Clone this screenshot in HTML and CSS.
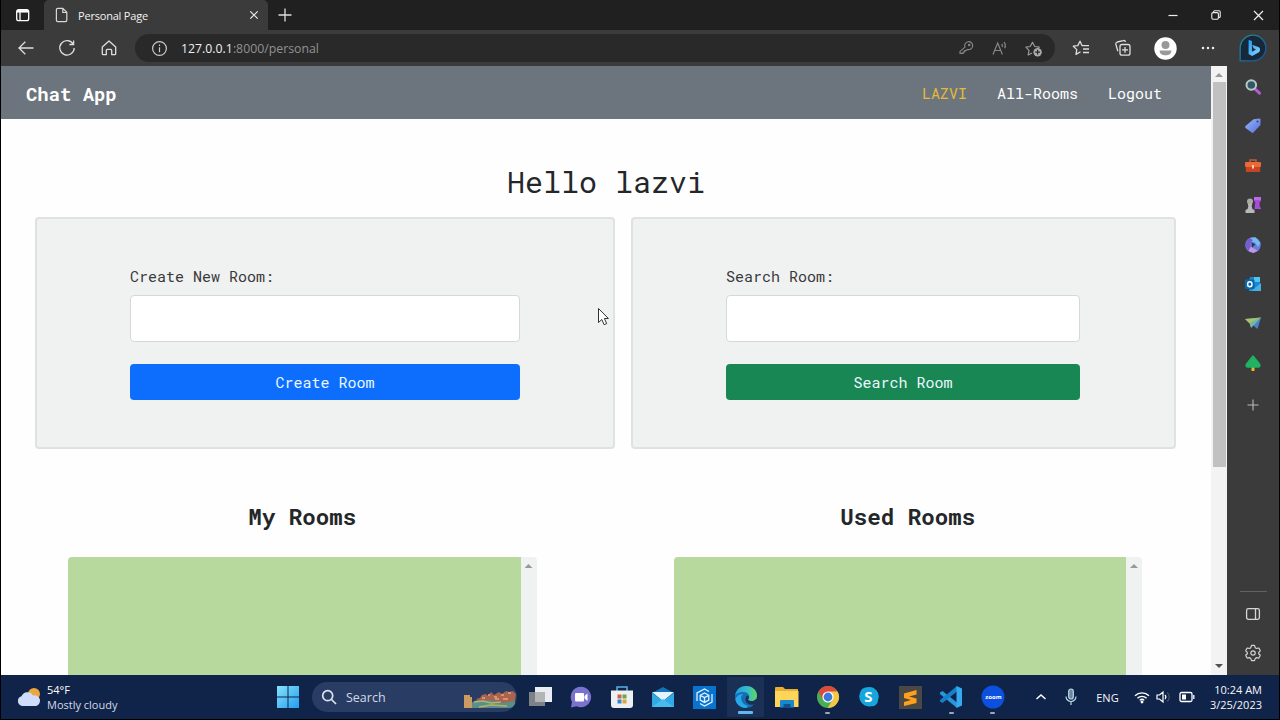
FILE: index.html
```html
<!DOCTYPE html>
<html lang="en">
<head>
<meta charset="utf-8">
<title>Personal Page</title>
<link rel="stylesheet" href="styles.css">
</head>
<body>
<div class="screen">
  <div class="titlebar">
    <div class="tab-actions"><svg width="16" height="16" viewBox="0 0 16 16" fill="none" stroke="#fff" stroke-width="1.3"><rect x="1.7" y="2.7" width="12" height="11" rx="2"/><path d="M2 4.3h11.5" stroke-width="2.5"/><path d="M5 5v8.5"/></svg></div>
    <div class="tab">
      <svg width="14" height="16" viewBox="0 0 14 16" fill="none" stroke="#d8d8d8" stroke-width="1.2"><path d="M2.8 1.3h5l4 4v7.9a1.4 1.4 0 0 1-1.4 1.4H2.8a1.4 1.4 0 0 1-1.4-1.4V2.7a1.4 1.4 0 0 1 1.4-1.4zM7.8 1.5v4h4"/></svg>
      <span class="tab-title">Personal Page</span>
      <svg width="10" height="10" viewBox="0 0 10 10" stroke="#eee" stroke-width="1.2"><path d="M1.3 1.3l7.4 7.4M8.7 1.3L1.3 8.7"/></svg>
    </div>
    <div class="new-tab"><svg width="14" height="14" viewBox="0 0 14 14" stroke="#ddd" stroke-width="1.3"><path d="M.5 7h13M7 .5v13"/></svg></div>
    <div class="window-controls">
      <span><svg width="10" height="10" viewBox="0 0 10 10" stroke="#eee" stroke-width="1.2"><path d="M.5 5.5h9"/></svg></span>
      <span><svg width="10" height="10" viewBox="0 0 10 10" fill="none" stroke="#eee" stroke-width="1.1"><rect x=".8" y="2.6" width="6.6" height="6.6" rx="1.2"/><path d="M2.6 2.4V1.8a1 1 0 0 1 1-1H8a1.2 1.2 0 0 1 1.2 1.2v4.4a1 1 0 0 1-1 1h-.7"/></svg></span>
      <span><svg width="11" height="11" viewBox="0 0 11 11" stroke="#eee" stroke-width="1.2"><path d="M1 1l9 9M10 1l-9 9"/></svg></span>
    </div>
  </div>

  <div class="toolbar">
    <div class="nav-icons">
      <span><svg width="18" height="18" viewBox="0 0 18 18" fill="none" stroke="#dedede" stroke-width="1.3"><path d="M16.5 9H2M8.3 2.8L2 9l6.3 6.2"/></svg></span>
      <span><svg width="18" height="18" viewBox="0 0 18 18" fill="none" stroke="#dedede" stroke-width="1.3"><path d="M15.2 5.2A7.2 7.2 0 1 0 16.2 9M15.6 1.5v4h-4.2"/></svg></span>
      <span><svg width="18" height="18" viewBox="0 0 18 18" fill="none" stroke="#dedede" stroke-width="1.3" stroke-linejoin="round"><path d="M2.3 8L9 2l6.7 6v6.7a1 1 0 0 1-1 1h-3v-4.4a1 1 0 0 0-1-1H7.3a1 1 0 0 0-1 1v4.4h-3a1 1 0 0 1-1-1z"/></svg></span>
    </div>
    <div class="address">
      <svg width="17" height="17" viewBox="0 0 17 17" fill="none" stroke="#ccc" stroke-width="1.2"><circle cx="8.5" cy="8.5" r="6.9"/><path d="M8.5 7.3v5M8.5 4.6v1.5"/></svg>
      <span class="url"><b>127.0.0.1</b>:8000/personal</span>
      <div class="address-icons">
        <span><svg width="16" height="16" viewBox="0 0 16 16" fill="none" stroke="#888" stroke-width="1.1"><path d="M7 7.2a4 4 0 1 1 2.3 2.2L8 10.6H6.6V12H5.2v1.4H2v-2z"/><circle cx="11.2" cy="5" r=".7"/></svg></span>
        <span><svg width="18" height="17" viewBox="0 0 18 17" fill="none" stroke="#888" stroke-width="1.2"><path d="M2 14.5L6.7 3l4.7 11.5M3.7 10.5h6M10.7 3.8a3.5 3.5 0 0 1 .5 3.2M13 2a6 6 0 0 1 .7 6.3"/></svg></span>
        <span><svg width="18" height="17" viewBox="0 0 18 17" fill="none" stroke="#999" stroke-width="1.2" stroke-linejoin="round"><path d="M7 13l-3.8 2 .8-4.6L.9 7.1l4.3-.6L7.5 2.3l2.3 4.2 4.5.6-1.8 1.7"/><circle cx="12.6" cy="12.2" r="4.2" fill="#aaa" stroke="none"/><path d="M12.6 9.8v4.8M10.2 12.2H15" stroke="#292929"/></svg></span>
      </div>
    </div>
    <div class="tool-icons">
      <span><svg width="18" height="18" viewBox="0 0 18 18" fill="none" stroke="#ddd" stroke-width="1.3" stroke-linejoin="round"><path d="M8.5 12.800L4 15.400l.8-4.800L1.300 7.200l4.500-.6L8 2.200l2 4.400h7M11 10h6M11 13.500h6"/></svg></span>
      <span><svg width="18" height="18" viewBox="0 0 18 18" fill="none" stroke="#ddd" stroke-width="1.3"><rect x="6" y="5.5" width="10" height="10.7" rx="2"/><path d="M11 8v5.8M8 10.9h6M3.9 12.2L1.8 5.1A2 2 0 0 1 3.2 3l6-1.4a2 2 0 0 1 2.4 1.3"/></svg></span>
      <span><svg width="23" height="23" viewBox="0 0 23 23"><circle cx="11.5" cy="11.5" r="11.2" fill="#fff"/><circle cx="11.5" cy="8" r="4" fill="#999"/><path d="M5.6 13.4h11.8c0 3.3-2.5 4.8-5.9 4.8s-5.9-1.5-5.9-4.8z" fill="#999"/></svg></span>
      <span><svg width="14" height="4" viewBox="0 0 14 4" fill="#eee"><circle cx="2" cy="2" r="1.25"/><circle cx="7" cy="2" r="1.25"/><circle cx="12" cy="2" r="1.25"/></svg></span>
      <span class="bing"><svg width="30" height="30" viewBox="0 0 30 30"><defs><linearGradient id="bingRing" x2="1" y2="1"><stop stop-color="#208f9c"/><stop offset="1" stop-color="#214d8a"/></linearGradient><linearGradient id="bingB" x2="1" y2="1"><stop stop-color="#219cf1"/><stop offset="1" stop-color="#8bd6ff"/></linearGradient></defs><path d="M15 2.2A12.8 12.8 0 1 1 15 27.8H2.2V15A12.8 12.8 0 0 1 15 2.2z" fill="#17283b" stroke="url(#bingRing)" stroke-width="1.3"/><path d="M10.6 6.8l3.3 1.3v10.7l4.1-2.3-2.5-1.2-1.4-3.5 6.2 2.3c2.3 1 2.2 4.3.2 5.5l-6.4 3.5-3.5-2z" fill="url(#bingB)"/></svg></span>
    </div>
  </div>

  <div class="browser-body">
    <main class="page">
      <nav class="navbar">
        <span class="brand">Chat App</span>
        <div class="links"><a class="user">LAZVI</a><a>All-Rooms</a><a>Logout</a></div>
      </nav>
      <h1 class="hello">Hello lazvi</h1>
      <div class="cards">
        <form class="card create">
          <label>Create New Room:</label><div class="input"></div>
          <div class="btn blue">Create Room</div>
        </form>
        <form class="card search">
          <label>Search Room:</label><div class="input"></div>
          <div class="btn green">Search Room</div>
        </form>
      </div>
      <div class="rooms">
        <section><h2>My Rooms</h2><div class="list"><div class="list-body"></div><div class="list-scroll"><i class="up"></i></div></div></section>
        <section><h2>Used Rooms</h2><div class="list"><div class="list-body"></div><div class="list-scroll"><i class="up"></i></div></div></section>
      </div>
    </main>
    <div class="scrollbar"><i class="up"></i><div class="thumb"></div><i class="down"></i></div>
    <aside class="sidebar">
      <span><svg width="18" height="18" viewBox="0 0 18 18"><path d="M10.5 10.5l5 4.7" stroke="#b45bd6" stroke-width="3" stroke-linecap="round"/><circle cx="7.3" cy="7" r="4.8" fill="#315864" stroke="#b9c8cd" stroke-width="2"/></svg></span>
      <span><svg width="18" height="18" viewBox="0 0 18 18"><defs><linearGradient id="tagFill" y2="1"><stop stop-color="#9bb9f8"/><stop offset="1" stop-color="#536ce0"/></linearGradient></defs><path d="M9.5 2.2l6-.8 1 1V8l-7.8 8.2L1.5 11q-.8-1 0-2z" fill="url(#tagFill)"/><circle cx="13.5" cy="4.5" r="1" fill="#37405f"/></svg></span>
      <span><svg width="18" height="18" viewBox="0 0 18 18"><path d="M6 5V3h6v2" fill="none" stroke="#c7573b" stroke-width="1.5"/><rect x="1" y="5" width="16" height="5" rx="1" fill="#e96a38"/><path d="M1.8 10h14.4v4a1 1 0 0 1-1 1H2.8a1 1 0 0 1-1-1z" fill="#c84523"/><path d="M9 8v3.5" stroke="#ffcf99" stroke-width="2"/></svg></span>
      <span><svg width="18" height="18" viewBox="0 0 18 18"><path d="M10 1h7v4l-1.400 1v4.500L17 12v1h-6.500l.8-7L10 5z" fill="#a64ddd"/><path d="M10 1h7v3h-7z" fill="#bd68eb"/><circle cx="6" cy="5.500" r="3" fill="#aaa"/><path d="M3.700 8h4.600l-.7 2 .8 3 2.100 1v3H1.500v-3l2.100-1 .8-3z" fill="#b9b9b9"/></svg></span>
      <span><svg width="18" height="18" viewBox="0 0 18 18"><circle cx="9" cy="9" r="7.800" fill="#657ddd"/><path d="M5.500 2l6-.8 5 5.800-2.500 4L10.500 6H5z" fill="#75b9ee"/><path d="M5.500 1.800L1 9l3.600 6.200L7 11 5.800 8 9 4z" fill="#775dca"/><path d="M4.500 15l5 2 4-2.500-3-1.800-4-2z" fill="#c595e3"/><path d="M7.500 6.500l4 2-3.500 3z" fill="#29364e"/></svg></span>
      <span><svg width="18" height="18" viewBox="0 0 18 18"><path d="M6 2h10v14H5V5z" fill="#1a86d1"/><path d="M10 2h6v5h-6z" fill="#51c3f2"/><path d="M7 16l10-8v8z" fill="#46afe4"/><rect x="1" y="4.5" width="9.5" height="9.5" rx="1" fill="#0868ae"/><ellipse cx="5.8" cy="9.2" rx="2.2" ry="2.5" fill="none" stroke="#fff" stroke-width="1.4"/></svg></span>
      <span><svg width="18" height="18" viewBox="0 0 18 18"><path d="M1 4l16-1.500L13.500 14 8 9.500z" fill="#4a83ca"/><path d="M1 4l16-1.500-11.500 6z" fill="#aac269"/><path d="M5.500 8.500L17 2.500 7 13z" fill="#76b9a6"/></svg></span>
      <span><svg width="18" height="19" viewBox="0 0 18 19"><path d="M9 12v5" stroke="#e7b52c" stroke-width="3"/><path d="M8 2q1-1.300 2 0l6 7.500c1.200 2 .5 4.200-1.500 4.200h-11C1.500 13.700.800 11.500 2 9.500z" fill="#20b263"/></svg></span>
      <span class="add"><svg width="14" height="14" viewBox="0 0 14 14" stroke="#bbb" stroke-width="1.1"><path d="M1.500 7h11M7 1.500v11"/></svg></span>
      <div class="sidebar-end">
        <hr>
        <span><svg width="16" height="16" viewBox="0 0 16 16" fill="none" stroke="#d5d5d5" stroke-width="1.3"><rect x="1.600" y="2.600" width="12.800" height="10.800" rx="1.800"/><path d="M10.500 3v10"/></svg></span>
        <span><svg width="18" height="18" viewBox="0 0 18 18" fill="none" stroke="#d5d5d5" stroke-width="1.2" stroke-linejoin="round"><path d="M7.300 2l.5-.6h2.400l.5.6.5 1.700 1.300.8 1.900-.5.6.3 1.100 2v.8l-1.400 1.300v1.300l1.400 1.300v.8l-1.100 2-.6.3-1.900-.5-1.300.8-.5 1.700-.5.500H7.800l-.5-.5-.5-1.700-1.300-.8-1.900.5-.6-.3-1.100-2V11l1.400-1.300V8.400L1.900 7.100v-.8l1.100-2 .6-.3 1.900.5 1.300-.8z"/><circle cx="9" cy="9" r="2.200"/></svg></span>
      </div>
    </aside>
  </div>

  <footer class="taskbar">
    <div class="weather">
      <svg width="26" height="24" viewBox="0 0 26 24"><circle cx="18" cy="9" r="6" fill="#eda53d"/><path d="M6 21a5 5 0 0 1-.5-9.700A6.300 6.300 0 0 1 17 10.500 5.300 5.300 0 0 1 20.200 21z" fill="#cfddfa"/></svg>
      <div><b>54°F</b><br>Mostly cloudy</div>
    </div>
    <span class="start"><svg width="22" height="22" viewBox="0 0 22 22"><defs><linearGradient id="startFill" x2="1" y2="1"><stop stop-color="#86e2fb"/><stop offset="1" stop-color="#239ef0"/></linearGradient></defs><path d="M0 0h10.500v10.500H0zM11.500 0H22v10.500H11.500zM0 11.500h10.500V22H0zM11.500 11.500H22V22H11.500z" fill="url(#startFill)"/></svg></span>
    <div class="task-search">
      <svg width="16" height="16" viewBox="0 0 16 16" fill="none" stroke="#dce3ee" stroke-width="1.700"><circle cx="6.700" cy="6.700" r="5"/><path d="M10.500 10.500L15 15"/></svg>
      <span>Search</span>
      <svg class="city" width="54" height="22" viewBox="0 0 54 22"><path d="M8 14l6-3h38v4q-2 4-6 4H5z" fill="#598f88"/><path d="M13 10l4-1 2-3 4-1 2 2 3-4 3 3 5-3 3 2 4-3 3 1 4-1 3 3-1 7-12 2-13-3-10 1z" fill="#a96450"/><path d="M1 6h6v2h2v11H1z" fill="#cc9a62"/><path d="M19 9h3m3-3h2m4 2h3m4-2h3m4-2h3m-16 6h4m4 0h5" stroke="#f0a077" stroke-width="1.500"/><path d="M11 13l9-1 8 2 10-1M16 18l12-2 16 1" stroke="#b5b06f" stroke-width="1.500" fill="none"/></svg>
    </div>
    <div class="apps">
      <span><svg width="24" height="24" viewBox="0 0 24 24"><rect x="7" y="2" width="17" height="15" fill="#e9edf1"/><rect x="1" y="7" width="16" height="14" fill="#7d8287"/><rect x="7" y="7" width="10" height="10" fill="#b2b4b6"/></svg></span>
      <span><svg width="22" height="22" viewBox="0 0 22 22"><path d="M11 .8A10.200 10.200 0 1 1 6.500 20.200L1 21.500l1-5.500A10.200 10.200 0 0 1 11 .8z" fill="#7b72cf"/><rect x="5" y="7" width="9" height="8.500" rx="1" fill="#fff"/><path d="M14.500 10l3-2.500V15l-3-2.500z" fill="#fff"/></svg></span>
      <span><svg width="24" height="24" viewBox="0 0 24 24"><path d="M7 6V2h10v4" fill="none" stroke="#59b3dd" stroke-width="1.500"/><path d="M1 5.500h22V20a3 3 0 0 1-3 3H4a3 3 0 0 1-3-3z" fill="#edf0f1"/><path d="M7.500 9.500h4v4h-4z" fill="#d36142"/><path d="M12.500 9.500h4v4h-4z" fill="#6da54a"/><path d="M7.500 14.500h4v4h-4z" fill="#3286cf"/><path d="M12.500 14.500h4v4h-4z" fill="#dba640"/></svg></span>
      <span><svg width="24" height="24" viewBox="0 0 24 24"><path d="M1 8l11-6 11 6v13H1z" fill="#1473b8"/><path d="M1 7h22l-11 9z" fill="#e6f3fc"/><path d="M1 8l11 8 11-8v14H1z" fill="#31a9e4"/><path d="M1 22l11-8 11 8z" fill="#47bbee"/></svg></span>
      <span><svg width="23" height="23" viewBox="0 0 23 23"><path d="M0 0h23v23H0z" fill="#0874cf"/><path d="M4 15V7l7.500-4L16 5.500M19 8v8l-7.500 4L7 17.500M11.500 7l4.300 2.300v4.800l-4.300 2.300-4.300-2.300V9.300zM7.200 9.300l4.300 2.200 4.300-2.200M11.500 11.500v4.900" fill="none" stroke="#e4f2ff" stroke-width="1.300"/></svg></span>
      <span class="active"><svg width="24" height="24" viewBox="0 0 24 24"><defs><linearGradient id="edgeTop"><stop stop-color="#219edc"/><stop offset=".55" stop-color="#32bdcd"/><stop offset="1" stop-color="#62d65c"/></linearGradient></defs><circle cx="12" cy="12" r="11" fill="#176cb5"/><path d="M1 11C2 4.600 6.300 1 12 1c6.800 0 11 4.500 11 9.500 0 3.500-2.400 5.500-5.300 5.500-3.300 0-4.200-1.300-3.200-2.300 2.300-3-1-6.700-5-6.700C5.500 7 2 8.500 1 11z" fill="url(#edgeTop)"/><path d="M14.500 13.700c-1 1-.1 2.300 3.200 2.300 1.800 0 3.400-.6 4.400-2q1.500 0 1.900 2l-2 3q-2 1-5 .8c-4.100 0-6.400-4-5.200-7.300.4-1.300 1.500-1.800 2.500-1.600.8.800.8 1.800.2 2.800z" fill="#1b3055"/><path d="M7.200 12c-.3 5 2.700 8.300 7 8.700l-2.200 2.300C5 22.600 1.500 18 1.500 14 3 9.500 7 8.500 9.500 9.500 8 10 7.300 10.800 7.200 12z" fill="#26a9e9"/></svg><i></i></span>
      <span><svg width="24" height="23" viewBox="0 0 24 23"><path d="M0 2q0-1 1-1h7l2 2h13v18H0z" fill="#e8ae32"/><path d="M0 5h23.500v16H0z" fill="#ffd45b"/><path d="M5 15q0-1 1-1h12q1 0 1 1v6.500H5z" fill="#1788cb"/><path d="M8.500 18h7v4h-7z" fill="#11508b"/></svg></span>
      <span><svg width="24" height="24" viewBox="0 0 24 24"><circle cx="12" cy="12" r="11" fill="#4aad55"/><path d="M2.500 6.400A11 11 0 0 1 21.500 6.400L12 7l-5 8z" fill="#df4939"/><path d="M21.500 6.400A11 11 0 0 1 11.700 23l5.300-9-5-7.500z" fill="#f6c744"/><circle cx="12" cy="12" r="5.600" fill="#fff"/><circle cx="12" cy="12" r="4.400" fill="#3b79dd"/></svg><i></i></span>
      <span><svg width="22" height="22" viewBox="0 0 22 22"><path d="M2 7A7 7 0 0 1 9 1.200 9.500 9.500 0 0 1 20 14a6 6 0 0 1-7 6.200A9.800 9.800 0 0 1 2 7z" fill="#16a5dc"/><text x="6.300" y="16.400" class="skype">S</text></svg></span>
      <span><svg width="23" height="23" viewBox="0 0 23 23"><path d="M0 0h23v23H0z" fill="#4a4844"/><path d="M5 7.500L17.500 4v4.500L10 10.600l7.500 2V17L5 20v-4l7-2-7-2z" fill="#ffa01d"/></svg></span>
      <span><svg width="24" height="24" viewBox="0 0 24 24"><path d="M1 7.500L3.500 6 18 17.500V23L1 9z" fill="#2796df"/><path d="M1 16.500L3.500 18 18 6.500V1L1 15z" fill="#1680c6"/><path d="M17.500 1L23 3.500v17L17.500 23z" fill="#36aaf0"/></svg><i></i></span>
      <span><svg width="24" height="24" viewBox="0 0 24 24"><circle cx="12" cy="12" r="11.500" fill="#0c50df"/><text x="4.300" y="14" class="zoom">zoom</text></svg><i></i></span>
    </div>
    <div class="tray">
      <svg class="chevron" width="12" height="8" viewBox="0 0 12 8" fill="none" stroke="#fff" stroke-width="1.500"><path d="M1.500 6L6 2l4.500 4"/></svg>
      <svg class="mic" width="12" height="18" viewBox="0 0 12 18" fill="none" stroke="#b9d8eb" stroke-width="1.200"><rect x="3.700" y="1" width="4.600" height="10" rx="2.300" fill="#6d879a"/><path d="M1 8.500a5 5 0 0 0 10 0M6 13.500V17"/></svg>
      <span class="lang">ENG</span>
      <svg class="wifi" width="16" height="13" viewBox="0 0 16 13" fill="none" stroke="#fff" stroke-width="1.300"><path d="M1 4.800a10 10 0 0 1 14 0M3.400 7.200a6.500 6.500 0 0 1 9.200 0M5.700 9.400a3.300 3.300 0 0 1 4.600 0"/><circle cx="8" cy="11" r=".8" fill="#fff"/></svg>
      <svg class="sound" width="16" height="14" viewBox="0 0 16 14" fill="none" stroke="#fff" stroke-width="1.200"><path d="M1 5h2.500L7 2v10L3.500 9H1zM9 5a3 3 0 0 1 0 4"/><path d="M11.200 2.500a6 6 0 0 1 0 9" stroke="#46516c"/></svg>
      <svg class="battery" width="16" height="12" viewBox="0 0 16 12" fill="none" stroke="#fff" stroke-width="1.300"><rect x="1" y="1.500" width="12" height="9" rx="1.500"/><path d="M14.800 4v4"/><path d="M3 3.500h4v5H3z" fill="#fff" stroke="none"/></svg>
      <div class="clock">10:24 AM<br>3/25/2023</div>
    </div>
  </footer>
  <svg class="cursor" width="13" height="20" viewBox="0 0 13 20"><path d="M1.500 1.500v14l3.300-3 2.300 5.200 2.600-1.100L7.400 11.500h4z" fill="#fff" stroke="#333" stroke-width="1"/></svg>
</div>
</body>
</html>
```
FILE: styles.css
```css
* { box-sizing: border-box; }
body { margin: 0; background: #000; font-family: "Open Sans", "Noto Sans", sans-serif; }
svg { display: block; flex: none; }
.screen { position: relative; width: 1280px; height: 720px; padding: 0 1px 1px; display: flex; flex-direction: column; overflow: hidden; }

.titlebar { height: 30px; flex: none; display: flex; background: #202020; }
.tab-actions { width: 43px; display: grid; place-items: center; }
.tab { width: 224px; display: flex; align-items: center; padding: 0 9px 0 11px; background: #3b3b3b; color: #f2f2f2; border-radius: 5px 5px 0 0; }
.tab-title { flex: 1; padding-left: 9px; font-size: 11px; letter-spacing: -.2px; }
.new-tab { width: 34px; display: grid; place-items: center; }
.window-controls { display: flex; margin-left: auto; margin-right: -1px; }
.window-controls span { width: 43px; display: grid; place-items: center; }

.toolbar { height: 36px; flex: none; display: flex; align-items: center; background: #3b3b3b; }
.nav-icons { display: flex; padding-left: 4px; width: 134px; }
.nav-icons span { width: 41.5px; display: grid; place-items: center; }
.address { width: 920px; height: 28px; display: flex; align-items: center; padding: 0 4px 0 16px; border-radius: 14px; background: #292929; }
.url { padding-left: 13px; font-size: 12.3px; color: #929292; }
.url b { font-weight: 400; color: #f0f0f0; }
.address-icons { display: flex; margin-left: auto; }
.address-icons span { width: 34px; display: grid; place-items: center; }
.tool-icons { display: flex; align-items: center; padding-left: 5px; }
.tool-icons span { width: 42.3px; display: grid; place-items: center; }
.tool-icons .bing { width: 47px; }

.browser-body { height: 609px; flex: none; display: flex; }
.page { width: 1210px; flex: none; overflow: hidden; background: #fefefe; color: #24272a; font-family: "Roboto Mono", "DejaVu Sans Mono", monospace; font-size: 15px; }
.navbar { height: 53px; display: flex; align-items: center; justify-content: space-between; padding: 2px 49px 0 25px; background: #6c757d; color: #fff; }
.brand { font-size: 18.9px; font-weight: 700; }
.links { display: flex; gap: 30px; padding-bottom: 2px; }
.links a { line-height: 20px; }
.links .user { color: #e6b939; }
.hello { margin: 44px 0 16px; text-align: center; font-size: 30px; line-height: 38px; font-weight: 400; }
.cards { display: flex; gap: 16px; padding-left: 34px; }
.card { height: 232px; border: 2px solid #e0e1e1; border-radius: 4px; background: #f0f1f1; }
.create { width: 580px; padding: 45px 93px 0; }
.search { width: 545px; padding: 45px 94px 0 93px; }
.card label { display: block; line-height: 24px; color: #38393a; margin-bottom: 7px; }
.input { height: 47px; border: 1px solid #d5d7d9; border-radius: 4px; background: #fff; }
.btn { margin-top: 22px; height: 36px; line-height: 37px; border-radius: 4px; text-align: center; color: #eaf8ff; }
.blue { background: #0d6efd; }
.green { background: #198754; }
.rooms { display: flex; gap: 137px; padding: 52px 0 0 67px; }
.rooms section { width: 468.5px; }
.rooms h2 { margin: 0 0 26px; text-align: center; font-size: 22.5px; line-height: 30px; }
.list { height: 130px; display: flex; border-radius: 4px; overflow: hidden; }
.list-body { flex: 1; background: #b8d99e; }
.list-scroll { width: 16px; padding: 7px 4px; background: #f0f1f1; }
.up, .down { display: block; width: 8px; height: 4px; background: #999; }
.up { clip-path: polygon(50% 0, 100% 100%, 0 100%); }
.down { clip-path: polygon(0 0, 100% 0, 50% 100%); }
.scrollbar { width: 16px; flex: none; display: flex; flex-direction: column; align-items: center; padding: 7px 0; background: #f3f3f3; }
.thumb { width: 13px; height: 385px; margin-top: 5px; background: #c1c1c1; }
.scrollbar .down { margin-top: auto; background: #505050; }
.sidebar { flex: 1; display: flex; flex-direction: column; align-items: center; padding-top: 1px; background: #3b3b3b; }
.sidebar span { height: 39.5px; width: 51px; display: grid; place-items: center; }
.sidebar .add { padding-top: 5px; }
.sidebar-end { margin-top: auto; padding-bottom: 2px; }
.sidebar hr { width: 27px; margin: 0 auto 2px; border: 0; border-top: 1px solid #626262; }

.taskbar { height: 44px; flex: none; display: flex; align-items: center; background: #102449; color: #f4f6fa; }
.weather { width: 266px; display: flex; align-items: center; padding-left: 15px; gap: 5px; font-size: 11px; line-height: 15px; color: #d3dae8; }
.weather b { font-weight: 400; color: #fff; }
.start { width: 42px; display: grid; place-items: center; }
.task-search { width: 205px; height: 30px; margin: 0 2px 0 3px; display: flex; align-items: center; padding-left: 9px; border-radius: 15px; overflow: hidden; background: #293d64; color: #d2d9e5; font-size: 12.5px; }
.task-search span { padding-left: 9px; }
.city { margin-left: auto; margin-top: 6px; }
.apps { display: flex; }
.apps span { position: relative; width: 41.2px; height: 40px; display: grid; place-items: center; }
.apps .active { background: linear-gradient(90deg, transparent 2px, #1b3055 2px, #1b3055 39px, transparent 39px); }
.apps i { position: absolute; bottom: 3px; left: 18px; width: 5px; height: 2px; border-radius: 1px; background: #9ca7b7; }
.apps .active i { left: 13px; width: 15px; height: 3px; background: #61b8ed; }
.skype { font: 700 15px "Open Sans", sans-serif; fill: #fff; }
.zoom { font: 700 6px "Open Sans", sans-serif; fill: #fff; }
.tray { flex: 1; display: flex; align-items: center; font-size: 11px; }
.chevron { margin-left: 22px; }
.mic { margin-left: 18px; }
.lang { margin-left: 19px; width: 22px; }
.wifi { margin-left: 16px; }
.sound { margin-left: 6px; }
.battery { margin-left: 7px; }
.clock { margin-left: auto; padding-right: 17px; text-align: right; white-space: nowrap; line-height: 15px; }
.cursor { position: absolute; left: 597px; top: 307px; }
```
